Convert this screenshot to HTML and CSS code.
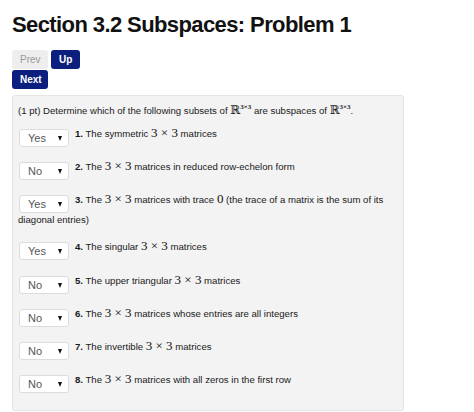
FILE: index.html
```html
<!DOCTYPE html>
<html>
<head>
<meta charset="utf-8">
<link rel="stylesheet" href="styles.css">
</head>
<body>
<h1 class="title">Section 3.2 Subspaces: Problem 1</h1>
<div class="nav">
  <div class="nav-row">
    <span class="btn btn-disabled">Prev</span>
    <span class="btn btn-primary">Up</span>
  </div>
  <div class="nav-row">
    <span class="btn btn-primary">Next</span>
  </div>
</div>
<div class="panel">
  <p class="intro">(1 pt) Determine which of the following subsets of <span class="rr">ℝ<sup>3×3</sup></span> are subspaces of <span class="rr">ℝ<sup>3×3</sup></span>.</p>
  <div class="item"><span class="sel"><span class="sel-text">Yes</span><span class="arrow"></span></span><b>1.</b> The symmetric <span class="m">3 × 3</span> matrices</div>
  <div class="item"><span class="sel"><span class="sel-text">No</span><span class="arrow"></span></span><b>2.</b> The <span class="m">3 × 3</span> matrices in reduced row-echelon form</div>
  <div class="item"><span class="sel"><span class="sel-text">Yes</span><span class="arrow"></span></span><b>3.</b> The <span class="m">3 × 3</span> matrices with trace <span class="m">0</span> (the trace of a matrix is the sum of its diagonal entries)</div>
  <div class="item"><span class="sel"><span class="sel-text">Yes</span><span class="arrow"></span></span><b>4.</b> The singular <span class="m">3 × 3</span> matrices</div>
  <div class="item"><span class="sel"><span class="sel-text">No</span><span class="arrow"></span></span><b>5.</b> The upper triangular <span class="m">3 × 3</span> matrices</div>
  <div class="item"><span class="sel"><span class="sel-text">No</span><span class="arrow"></span></span><b>6.</b> The <span class="m">3 × 3</span> matrices whose entries are all integers</div>
  <div class="item"><span class="sel"><span class="sel-text">No</span><span class="arrow"></span></span><b>7.</b> The invertible <span class="m">3 × 3</span> matrices</div>
  <div class="item"><span class="sel"><span class="sel-text">No</span><span class="arrow"></span></span><b>8.</b> The <span class="m">3 × 3</span> matrices with all zeros in the first row</div>
</div>
</body>
</html>
```
FILE: styles.css
```css
html, body {
  margin: 0;
  padding: 0;
  background: #ffffff;
}
body {
  padding: 0 12px;
  font-family: "Liberation Sans", Arial, sans-serif;
  color: #222;
}
.title {
  margin: 0;
  padding-top: 12px;
  font-size: 22px;
  line-height: 26px;
  font-weight: bold;
  color: #111;
  letter-spacing: -0.6px;
}
.nav {
  margin-top: 12px;
  display: flex;
  flex-direction: column;
  gap: 1px;
}
.nav-row {
  display: flex;
  gap: 3px;
}
.btn {
  display: inline-block;
  font-size: 10px;
  line-height: 19px;
  height: 19px;
  padding: 0 8px;
  border-radius: 3px;
  font-weight: bold;
}
.btn-disabled {
  background: #eeeeee;
  color: #9a9a9a;
  font-weight: normal;
  width: 20px;
  text-align: center;
}
.btn-primary {
  background: #0c1f7e;
  color: #ffffff;
}
.nav-row:last-child .btn {
  width: 20px;
  text-align: center;
}
.panel {
  margin-top: 6px;
  width: 380px;
  background: #f3f3f3;
  border: 1px solid #e4e4e4;
  border-radius: 3px;
  padding: 0 5px 4px 5px;
  font-size: 9.6px;
  color: #1a1a1a;
}
.intro {
  margin: 0;
  box-sizing: border-box;
  padding-top: 8px;
  line-height: 14px;
  height: 31px;
}
.rr {
  font-family: "DejaVu Serif", serif;
  font-size: 12px;
  line-height: 0;
}
.rr sup {
  font-size: 7px;
  line-height: 0;
  font-weight: bold;
  font-family: "Liberation Serif", serif;
  vertical-align: 5px;
}
.item {
  line-height: 14px;
  margin-bottom: 13px;
}
.item:nth-of-type(4) {
  margin-bottom: 14px;
}
.item b {
  font-weight: bold;
}
.sel {
  display: inline-flex;
  align-items: center;
  justify-content: space-between;
  box-sizing: border-box;
  width: 50px;
  height: 18px;
  margin: 0 6px 0 1px;
  padding: 0 6px 0 8px;
  background: #ffffff;
  border: 1px solid #dcdcdc;
  border-radius: 3px;
  vertical-align: -5px;
  font-size: 11px;
  line-height: 16px;
  color: #555;
}
.arrow {
  width: 0;
  height: 0;
  border-left: 2.5px solid transparent;
  border-right: 2.5px solid transparent;
  border-top: 5px solid #111;
}
.m {
  font-family: "Liberation Serif", serif;
  font-size: 13px;
  line-height: 0;
  color: #111;
}
```
